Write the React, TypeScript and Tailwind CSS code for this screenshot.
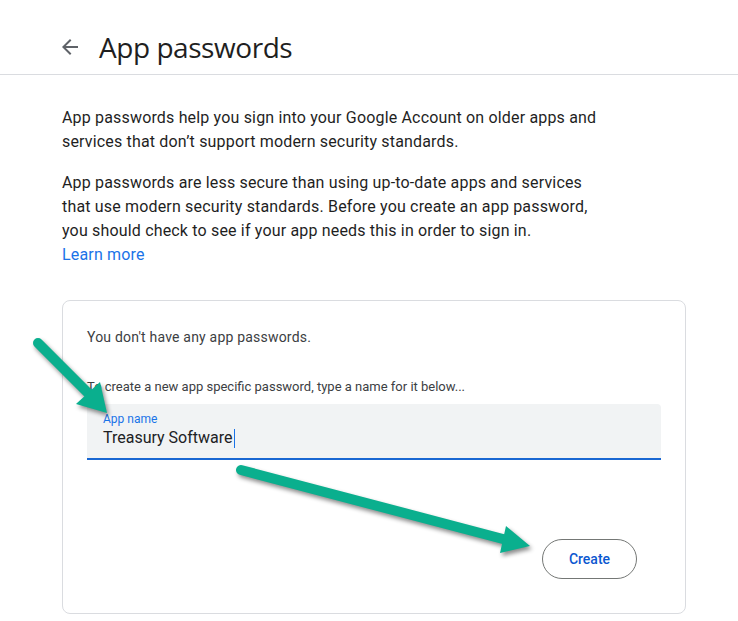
export default function App() {
  return (
    <div className="relative w-[738px] h-[621px] overflow-hidden bg-white font-['Roboto',sans-serif] text-[#1f1f1f]">
      {/* header */}
      <div className="flex h-[75px] items-start border-b border-[#dadce0] pl-[58px] pt-[29px]">
        <svg width="24" height="24" viewBox="0 0 24 24" className="mt-[6px] fill-[#5f6368]">
          <path d="M20 11H7.83l5.59-5.59L12 4l-8 8 8 8 1.41-1.41L7.83 13H20v-2z" />
        </svg>
        <h1 className="ml-[17px] text-[28px] leading-[36px] font-['Open_Sans',sans-serif] tracking-[-0.45px] text-[#1f1f1f]">
          App passwords
        </h1>
      </div>

      <div className="pl-[62px]">
        <p className="mt-[31px] text-[16px] leading-[24px] tracking-[0.17px] text-[#1f1f1f]">
          App passwords help you sign into your Google Account on older apps and
          <br />
          services that don’t support modern security standards.
        </p>
        <p className="mt-[17px] text-[16px] leading-[24px] tracking-[0.17px] text-[#1f1f1f]">
          App passwords are less secure than using up-to-date apps and services
          <br />
          that use modern security standards. Before you create an app password,
          <br />
          you should check to see if your app needs this in order to sign in.
          <br />
          <span className="text-[#1a73e8]">Learn more</span>
        </p>

        {/* card */}
        <div className="mt-[33px] flex h-[314px] w-[624px] flex-col rounded-lg border border-[#dadce0] px-[24px] pt-[26px]">
          <div className="text-[14px] leading-[20px] tracking-[0.2px] text-[#3c4043]">You don't have any app passwords.</div>
          <div className="mt-[30px] text-[13px] leading-[20px] text-[#3c4043]">
            To create a new app specific password, type a name for it below...
          </div>
          <div className="mt-[7px] flex h-[56px] flex-col rounded-t-[4px] border-b-2 border-[#1967d2] bg-[#f1f3f4] px-[16px] pt-[7px]">
            <span className="text-[12px] leading-[16px] text-[#1a73e8]">App name</span>
            <span className="flex items-center text-[16px] leading-[22px] text-[#202124]">
              Treasury Software
              <span className="ml-[1px] h-[19px] w-[1px] bg-[#1a73e8]" />
            </span>
          </div>
          <div className="mt-[79px] flex justify-end pr-[24px]">
            <button className="h-[40px] w-[95px] rounded-full border border-[#747775] text-[14px] font-medium text-[#0b57d0]">
              Create
            </button>
          </div>
        </div>
      </div>

      {/* annotation arrows */}
      <svg
        className="pointer-events-none absolute left-0 top-0 drop-shadow-[2px_3px_2px_rgba(0,0,0,0.45)]"
        width="738"
        height="621"
      >
        <line x1="38" y1="343" x2="88" y2="393" stroke="#0aaf8e" strokeWidth="10" strokeLinecap="round" />
        <polygon points="76,404 100,382 107,413" fill="#0aaf8e" />
        <line x1="241" y1="470" x2="503" y2="539" stroke="#0aaf8e" strokeWidth="10" strokeLinecap="round" />
        <polygon points="506,526 500,553 530,546" fill="#0aaf8e" />
      </svg>
    </div>
  )
}
